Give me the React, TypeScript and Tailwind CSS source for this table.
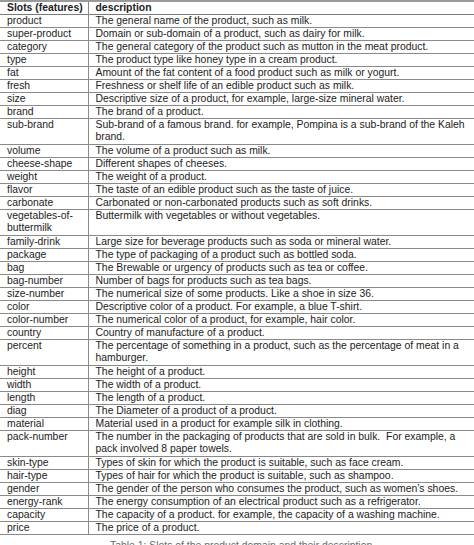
const rows: { slot: string[]; desc: string[] }[] = [
  { slot: ["product"], desc: ["The general name of the product, such as milk."] },
  { slot: ["super-product"], desc: ["Domain or sub-domain of a product, such as dairy for milk."] },
  { slot: ["category"], desc: ["The general category of the product such as mutton in the meat product."] },
  { slot: ["type"], desc: ["The product type like honey type in a cream product."] },
  { slot: ["fat"], desc: ["Amount of the fat content of a food product such as milk or yogurt."] },
  { slot: ["fresh"], desc: ["Freshness or shelf life of an edible product such as milk."] },
  { slot: ["size"], desc: ["Descriptive size of a product, for example, large-size mineral water."] },
  { slot: ["brand"], desc: ["The brand of a product."] },
  {
    slot: ["sub-brand"],
    desc: ["Sub-brand of a famous brand. for example, Pompina is a sub-brand of the Kaleh", "brand."],
  },
  { slot: ["volume"], desc: ["The volume of a product such as milk."] },
  { slot: ["cheese-shape"], desc: ["Different shapes of cheeses."] },
  { slot: ["weight"], desc: ["The weight of a product."] },
  { slot: ["flavor"], desc: ["The taste of an edible product such as the taste of juice."] },
  { slot: ["carbonate"], desc: ["Carbonated or non-carbonated products such as soft drinks."] },
  { slot: ["vegetables-of-", "buttermilk"], desc: ["Buttermilk with vegetables or without vegetables."] },
  { slot: ["family-drink"], desc: ["Large size for beverage products such as soda or mineral water."] },
  { slot: ["package"], desc: ["The type of packaging of a product such as bottled soda."] },
  { slot: ["bag"], desc: ["The Brewable or urgency of products such as tea or coffee."] },
  { slot: ["bag-number"], desc: ["Number of bags for products such as tea bags."] },
  { slot: ["size-number"], desc: ["The numerical size of some products. Like a shoe in size 36."] },
  { slot: ["color"], desc: ["Descriptive color of a product. For example, a blue T-shirt."] },
  { slot: ["color-number"], desc: ["The numerical color of a product, for example, hair color."] },
  { slot: ["country"], desc: ["Country of manufacture of a product."] },
  {
    slot: ["percent"],
    desc: ["The percentage of something in a product, such as the percentage of meat in a", "hamburger."],
  },
  { slot: ["height"], desc: ["The height of a product."] },
  { slot: ["width"], desc: ["The width of a product."] },
  { slot: ["length"], desc: ["The length of a product."] },
  { slot: ["diag"], desc: ["The Diameter of a product of a product."] },
  { slot: ["material"], desc: ["Material used in a product for example silk in clothing."] },
  {
    slot: ["pack-number"],
    desc: ["The number in the packaging of products that are sold in bulk.\u00a0 For example, a", "pack involved 8 paper towels."],
  },
  { slot: ["skin-type"], desc: ["Types of skin for which the product is suitable, such as face cream."] },
  { slot: ["hair-type"], desc: ["Types of hair for which the product is suitable, such as shampoo."] },
  { slot: ["gender"], desc: ["The gender of the person who consumes the product, such as women\u2019s shoes."] },
  { slot: ["energy-rank"], desc: ["The energy consumption of an electrical product such as a refrigerator."] },
  { slot: ["capacity"], desc: ["The capacity of a product. for example, the capacity of a washing machine."] },
  { slot: ["price"], desc: ["The price of a product."] },
]

const Lines = ({ items }: { items: string[] }) => (
  <>
    {items.map((t, i) => (
      <div key={i}>{t}</div>
    ))}
  </>
)

const App = () => {
  return (
    <main className="w-[474px] h-[545px] overflow-hidden bg-white text-[#1c1c1c] font-['Liberation_Sans',Arial,sans-serif] text-[10.4px] leading-[12px]">
      <table className="w-[490px] border-collapse border-t-2 border-[#9a9a9a] whitespace-nowrap">
        <thead>
          <tr className="border-b border-[#7a7a7a]">
            <th className="w-[88px] pl-[7px] text-left font-bold border-r border-[#8a8a8a] align-top">Slots (features)</th>
            <th className="pl-[7px] text-left font-bold align-top">description</th>
          </tr>
        </thead>
        <tbody>
          {rows.map((r) => {
            const tall = r.slot.length > 1 || r.desc.length > 1
            return (
              <tr key={r.slot.join("")} className="border-b border-[#8a8a8a]">
                <td className={`pl-[7px] align-top border-r border-[#8a8a8a] ${tall ? "pb-[1px]" : ""}`}>
                  <Lines items={r.slot} />
                </td>
                <td className={`pl-[7px] align-top ${tall ? "pb-[1px]" : ""}`}>
                  <Lines items={r.desc} />
                </td>
              </tr>
            )
          })}
        </tbody>
      </table>
      <p className="mt-[5px] pl-[110px] text-[#6a6a6a] whitespace-nowrap">
        Table 1: Slots of the product domain and their description.
      </p>
    </main>
  )
}

export default App
